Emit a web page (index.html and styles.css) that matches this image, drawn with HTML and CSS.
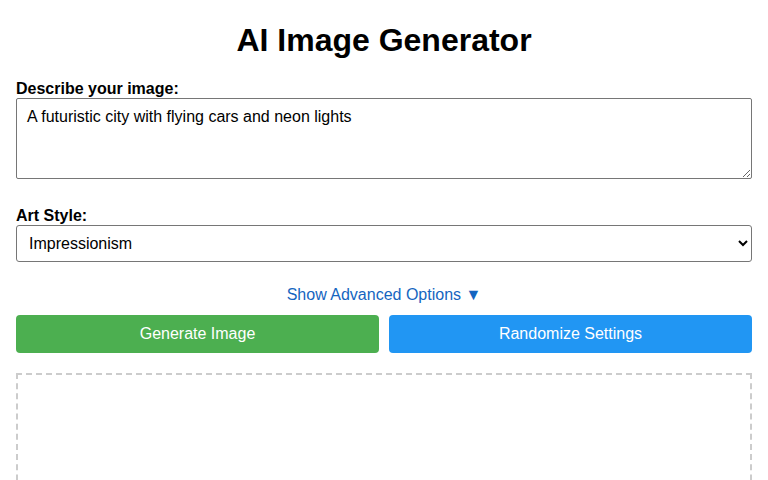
FILE: index.html
```html
<!doctype html>
<html lang="en">
<head>
	<meta charset="UTF-8">
	<title>AI Image Generator</title>
	<link rel="stylesheet" href="styles.css">
</head>
<body>
	<div class="wrap">
		<h1>AI Image Generator</h1>
		<div class="form-group">
			<label for="prompt">Describe your image:</label>
			<textarea id="prompt">A futuristic city with flying cars and neon lights</textarea>
		</div>
		<div class="form-group">
			<label for="style">Art Style:</label>
			<select id="style">
				<option>Realistic</option>
				<option selected>Impressionism</option>
				<option>Cyberpunk</option>
				<option>Watercolor</option>
			</select>
		</div>
		<div class="advanced">
			<a href="#" class="toggle">Show Advanced Options ▼</a>
		</div>
		<div class="actions">
			<button type="button" class="btn btn-generate">Generate Image</button>
			<button type="button" class="btn btn-random">Randomize Settings</button>
		</div>
		<div class="result"></div>
	</div>
</body>
</html>
```

FILE: styles.css
```css
*{
	box-sizing:border-box;
}
body{
	margin:0;
	font-family:"Liberation Sans", Arial, sans-serif;
	font-size:16px;
	color:#000;
	background:#fff;
}
.wrap{
	padding:0 16px;
}
h1{
	margin:22px 0 21px;
	font-size:32px;
	text-align:center;
}
.form-group{
	margin-bottom:28px;
}
.form-group label{
	display:block;
	font-weight:bold;
}
textarea{
	display:block;
	width:100%;
	height:81px;
	padding:9px 10px;
	font-family:inherit;
	font-size:16px;
	border:1px solid #767676;
	border-radius:2px;
}
select{
	display:block;
	width:100%;
	height:37px;
	padding:8px;
	font-family:inherit;
	font-size:16px;
	color:#000;
	background:#fff;
	border:1px solid #767676;
	border-radius:3px;
}
.advanced{
	text-align:center;
	margin-top:-4px;
	margin-bottom:11px;
}
.toggle{
	color:#1565c0;
	text-decoration:none;
}
.actions{
	display:flex;
	gap:10px;
	margin-bottom:20px;
}
.btn{
	flex:1;
	height:38px;
	padding:10px;
	font-family:inherit;
	font-size:16px;
	color:#fff;
	border:none;
	border-radius:4px;
}
.btn-generate{
	background-color:#4caf50;
}
.btn-random{
	background-color:#2196f3;
}
.result{
	height:300px;
	border:2px dashed #ccc;
}
```
